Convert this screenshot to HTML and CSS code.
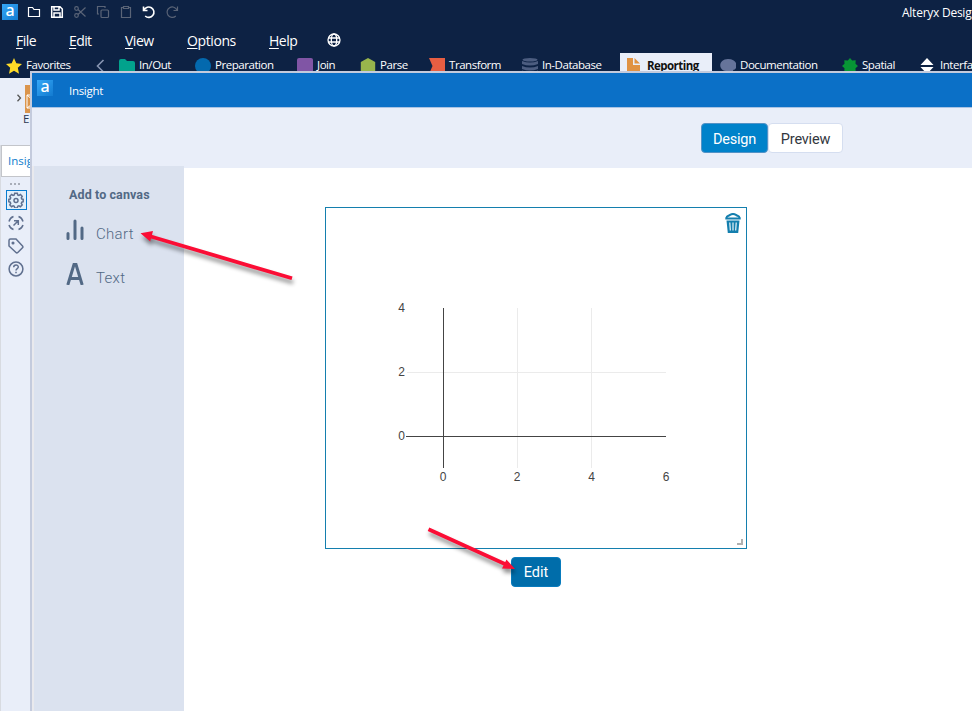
FILE: index.html
```html
<!DOCTYPE html>
<html lang="en">
<head>
<meta charset="utf-8">
<title>Alteryx Designer</title>
<link rel="stylesheet" href="styles.css">
</head>
<body>
<div class="app">
  <header class="header">
    <div class="quick">
      <span class="logo">a</span>
      <svg class="qi first" viewBox="0 0 16 16"><path d="M2.500 12.500v-9h4l1.500 2h5.500v7z"/></svg>
      <svg class="qi save" viewBox="0 0 16 16"><path d="M2.700 2.700h8.300l2.300 2.300v8.300H2.700zM5 3v3h5V3M5 13V9h6v4"/></svg>
      <svg class="qi dim" viewBox="0 0 16 16"><circle cx="4.500" cy="4.500" r="1.800"/><circle cx="4.500" cy="11.500" r="1.800"/><path d="M6 5.500l7.500 7M6 10.500L13.500 3.500"/></svg>
      <svg class="qi dim" viewBox="0 0 16 16"><rect x="6" y="6" width="7.500" height="7.500" rx="1"/><path d="M4 10H2.500V2.500H10V4"/></svg>
      <svg class="qi dim" viewBox="0 0 16 16"><path d="M5.500 3.500h-2v10h9v-10h-2M5.500 2.500h5v2h-5z"/></svg>
      <svg class="qi bold" viewBox="0 0 16 16"><path d="M2.500 2.500v4h4M3 6a5.200 5.200 0 1 1 1.200 6"/></svg>
      <svg class="qi dim" viewBox="0 0 16 16"><path d="M13.500 2.500v4h-4M13 6a5.200 5.200 0 1 0-1.200 6"/></svg>
      <span class="apptitle">Alteryx Designer</span>
    </div>
    <nav class="menu">
      <span class="m-file"><u>F</u>ile</span><span class="m-edit"><u>E</u>dit</span><span class="m-view"><u>V</u>iew</span><span class="m-options"><u>O</u>ptions</span><span class="m-help"><u>H</u>elp</span>
      <svg class="globe" viewBox="0 0 14 14"><circle cx="7" cy="7" r="6"/><ellipse cx="7" cy="7" rx="2.700" ry="6"/><path d="M1 5h12M1 9h12"/></svg>
    </nav>
    <nav class="tabs">
      <span class="tab"><svg viewBox="0 0 16 16"><path fill="#fedb27" d="M8 0l2.300 5.300 5.700.6-4.200 3.900 1.200 5.900L8 12.700 3 15.700l1.200-5.900L0 5.900l5.700-.6z"/></svg><b>Favorites</b></span>
      <span class="tab"><svg viewBox="0 0 16 16"><path fill="none" stroke="#8795b2" stroke-width="1.600" d="M7.500 2L1.500 8l6 6"/></svg></span>
      <span class="tab"><svg viewBox="0 0 16 16"><path fill="#02a28c" d="M0 3q0-2 2-2h4l2 2h6q2 0 2 2v11H0z"/></svg><b>In/Out</b></span>
      <span class="tab"><svg viewBox="0 0 16 16"><circle cx="8" cy="8" r="8" fill="#0369ae"/></svg><b>Preparation</b></span>
      <span class="tab"><svg viewBox="0 0 16 16"><rect width="16" height="16" rx="2" fill="#8055a5"/></svg><b>Join</b></span>
      <span class="tab"><svg viewBox="0 0 16 16"><path fill="#98b54c" d="M8 0l7.200 4v9L8 16 .8 13V4z"/></svg><b>Parse</b></span>
      <span class="tab"><svg viewBox="0 0 16 16"><path fill="#e75e42" d="M0 0h16v16H0l3.500-8z"/></svg><b>Transform</b></span>
      <span class="tab"><svg viewBox="0 0 16 16"><g fill="#4c5d80"><ellipse cx="8" cy="1.700" rx="7.500" ry="1.700"/><path d="M0 3q8 3 16 0v3q-8 3-16 0zM0 8q8 3 16 0v3q-8 3-16 0zM0 12.500q8 3 16 0V16H0z"/></g></svg><b>In-Database</b></span>
      <span class="tab active"><svg viewBox="0 0 16 16"><path fill="#e09243" d="M1 0h6v7h7v9H1zM8.500 0L14 5.500H8.500z"/></svg><b>Reporting</b></span>
      <span class="tab"><svg viewBox="0 0 16 16"><path fill="#66749a" d="M8 1c11 0 10 11 5 11l1 4-5-3C-3 14-2 1 8 1z"/></svg><b>Documentation</b></span>
      <span class="tab"><svg viewBox="0 0 16 16"><path fill="#079535" d="M8 0l2.200 2.500 3.500-.2-.2 3.500L16 8l-2.500 2.200.2 3.500-3.500-.2L8 16l-2.200-2.500-3.500.2.2-3.500L0 8l2.500-2.200-.2-3.500 3.500.2z"/></svg><b>Spatial</b></span>
      <span class="tab"><svg viewBox="0 0 16 16"><path fill="#fff" d="M7 0L.5 7h13zM.5 9h13L7 16z"/></svg><b>Interface</b></span>
    </nav>
  </header>

  <div class="palette">
    <svg class="expand" viewBox="0 0 6 8"><path d="M1.500 .8L4.500 4 1.500 7.200"/></svg>
    <div class="tool"><svg class="toolicon" viewBox="0 0 24 28"><rect width="24" height="28" fill="#db954d"/><path d="M2 10h16v13H2zM2 10l8 7-8 6" fill="none" stroke="#fff"/></svg><span>Email</span></div>
  </div>
  <div class="config">
    <div class="configtab">Insight</div>
    <div class="dots"><i></i><i></i><i></i></div>
    <span class="side selected"><svg viewBox="0 0 16 16"><path d="M6.700 1.200h2.600l.4 1.700 1.200.5 1.500-.9 1.800 1.800-.9 1.500.5 1.200 1.400.3v2.500l-1.400.4-.5 1.200.9 1.500-1.800 1.800-1.500-.9-1.200.5-.4 1.600H6.700l-.4-1.600-1.200-.5-1.500.9-1.800-1.800.9-1.500-.5-1.200L.8 9.800V7.300L2.200 7l.5-1.200-.9-1.500 1.800-1.800 1.500.9 1.200-.5z"/><circle cx="8" cy="8.500" r="2"/></svg></span>
    <span class="side"><svg viewBox="0 0 16 16"><path d="M1 6.500a7 7 0 0 1 4.500-5M10.500 1.500A7 7 0 0 1 15 6.500M15 10a7 7 0 0 1-4.500 4.500M5.500 14.500A7 7 0 0 1 1 10M5.500 10.500l4.500-4.500M6 5.700h4.300V10"/></svg></span>
    <span class="side"><svg viewBox="0 0 16 16"><path d="M1 2.500Q1 1 2.500 1H8l6.500 7q.8 1 0 1.800l-4.700 4.700q-1 .8-1.800 0L1 8z"/><circle cx="5" cy="5" r=".8"/></svg></span>
    <span class="side"><svg viewBox="0 0 16 16"><circle cx="8" cy="8" r="6.900"/><path d="M5.700 6.300c0-3 4.600-3 4.600-.2C10.300 7.700 8 7.600 8 9.500M8 10.800v1.500"/></svg></span>
  </div>

  <section class="window">
    <div class="titlebar"><span class="logo">a</span><span class="wintitle">Insight</span></div>
    <div class="modebar"><button class="mode on"><span>Design</span></button><button class="mode"><span>Preview</span></button></div>
    <div class="body">
      <aside class="sidebar">
        <h2>Add to canvas</h2>
        <div class="add"><svg class="bars" viewBox="0 0 18 22"><path d="M2 14.500v5M9 2v17.500M16 9v10.500"/></svg><span>Chart</span></div>
        <div class="add text"><svg class="lettera" viewBox="0 0 18 22"><path d="M1.800 22L8 1.500h2L16.200 22M4.500 15.500h9"/></svg><span>Text</span></div>
      </aside>
      <main class="canvas">
        <div class="card">
          <svg class="trash" viewBox="0 0 16 20"><path d="M1.500 5C1.500 2.500 4 3.200 5 1.800Q8 .2 11 1.800C12 3.200 14.500 2.500 14.500 5" fill="none" stroke="#147fae" stroke-width="2"/><path fill="#147fae" d="M.3 4.500h15.400v2H.3zM1.500 7.500h13L13.200 20H2.800z"/><path d="M4.800 9.500l.5 8M8 9.500v8M11.200 9.500l-.5 8" stroke="#fff" stroke-width="1.100"/></svg>
          <svg class="plot" viewBox="0 0 290 190">
            <path class="grid" d="M127.500 8v160M201.500 8v160M17 72.500h259"/>
            <path class="axis" d="M53.500 8v160M16 136.500h260"/>
            <g text-anchor="end"><text x="15" y="12">4</text><text x="15" y="76">2</text><text x="15" y="140">0</text></g>
            <g text-anchor="middle"><text x="53" y="181">0</text><text x="127" y="181">2</text><text x="201.500" y="181">4</text><text x="276" y="181">6</text></g>
          </svg>
          <i class="grip"></i>
        </div>
        <button class="edit">Edit</button>
      </main>
    </div>
  </section>

  <svg class="arrows" viewBox="0 0 972 711">
    <g fill="#fb0d35" stroke="#fb0d35">
      <path d="M150 236.200L292 278.300M428.500 529.300L506 564.500" stroke-width="3.800"/>
      <path d="M140.500 233.300l12.500-2.300-2.800 10.600zM515 569l-13-.5 4.500-9z" stroke="none"/>
    </g>
  </svg>
</div>
</body>
</html>
```
FILE: styles.css
```css
* { box-sizing: border-box; }
body { margin: 0; font-family: "Open Sans", "Noto Sans", sans-serif; }
.app { position: relative; width: 972px; height: 711px; overflow: hidden; background: #e9eef9; }
button { padding: 0; font-family: inherit; }

.header { height: 78px; background: #0d2244; color: #fff; overflow: hidden; }
.quick { display: flex; align-items: center; height: 24px; padding-left: 2px; gap: 7px; }
.logo { flex: none; width: 16px; height: 16px; background: linear-gradient(135deg, #35a7f7, #137bd0); color: #fff; font: 500 16px/13px "Noto Sans", sans-serif; text-align: center; }
.qi { flex: none; width: 16px; height: 16px; fill: none; stroke: #fff; stroke-width: 1.2; }
.qi.first { margin-left: 1px; }
.qi.save { stroke-width: 1.5; }
.qi.dim { stroke: #5a6477; }
.qi.bold { stroke-width: 1.6; }
.apptitle { margin: 1px 0 0 715px; font-size: 12px; letter-spacing: -.25px; white-space: nowrap; }
.menu { display: flex; height: 29px; padding: 7px 0 0 16px; font-size: 14px; line-height: 20px; }
.menu span { white-space: nowrap; }
.menu u { text-underline-offset: 2px; }
.m-file { width: 53px; letter-spacing: -.5px; }
.m-edit { width: 56px; letter-spacing: -.6px; }
.m-view { width: 62px; letter-spacing: -.5px; }
.m-options { width: 82px; letter-spacing: -.4px; }
.m-help { width: 58px; letter-spacing: -.5px; }
.globe { width: 14px; height: 14px; margin-top: 2px; fill: none; stroke: #fff; stroke-width: 1.3; }
.tabs { display: grid; height: 25px; padding-left: 6px; grid-template-columns: 90px 23px 76px 102px 63px 69px 93px 98px 100px 122px 78px 100px; }
.tab { display: flex; align-items: center; gap: 4px; font-size: 11.5px; letter-spacing: -.45px; white-space: nowrap; }
.tab b { margin-top: -2px; font-weight: 400; }
.tab svg { flex: none; width: 16px; height: 16px; margin-top: 1px; }
.tab.active { width: 92px; padding-left: 6px; gap: 5px; background: #e9eef9; color: #111; letter-spacing: -.55px; }
.tab.active b { margin-top: 0; font-weight: 700; }

.palette { display: flex; height: 67px; padding: 7px 0 0 16px; }
.expand { flex: none; width: 6px; height: 8px; margin-top: 9px; fill: none; stroke: #555; stroke-width: 1.3; }
.tool { display: flex; flex-direction: column; margin-left: 1px; font-size: 11.5px; line-height: 12px; color: #2c3850; }
.toolicon { width: 24px; height: 28px; margin-left: 2px; }
.config { width: 30px; height: 566px; border-left: 1px solid #d8dbe1; }
.configtab { width: 60px; height: 32px; padding-left: 6px; border: 1px solid #c3c5ca; background: #fff; color: #0e7dcc; font-size: 11.5px; line-height: 30px; }
.dots { display: flex; gap: 2px; height: 13px; padding: 6px 0 0 9px; }
.dots i { width: 2px; height: 2px; background: #a9aeb9; }
.side { display: flex; width: 21px; height: 20px; margin: 0 0 3px 5px; padding-right: 1px; align-items: center; justify-content: center; }
.side.selected { padding: 0 1px 1px 0; border: 1px solid #087ccf; background: #e3f0fb; }
.side svg { flex: none; width: 16px; height: 16px; fill: none; stroke: #60708f; stroke-width: 1.5; }

.window { position: absolute; left: 30px; top: 71px; width: 960px; height: 660px; border: solid #c4cbdd; border-width: 2px 0 0 2px; background: #fff; }
.titlebar { display: flex; height: 35px; padding: 7px 0 0 5px; background: #0b70c7; border-bottom: 1px solid #a9c3e4; color: #fff; }
.wintitle { margin: 3px 0 0 16px; font-size: 11.5px; line-height: 16px; letter-spacing: -.3px; }
.modebar { display: flex; height: 60px; padding: 15px 0 0 669px; background: #e9eef9; }
.mode { width: 67px; height: 30px; border: 1px solid #d5def0; border-radius: 4px; background: #fff; color: #33373e; font: 14.5px "Roboto", sans-serif; letter-spacing: -.25px; }
.mode span { position: relative; top: 1px; }
.mode + .mode { width: 75px; letter-spacing: -.2px; }
.mode.on { border-color: #5292c6; background: #0082ca; color: #fff; }
.body { display: flex; height: 560px; }
.sidebar { width: 152px; margin-top: -2px; padding: 21px 0 0 34px; border-left: 2px solid #e9e9ed; background: #dbe2ef; color: #526985; font-family: "Roboto", sans-serif; }
.sidebar h2 { margin: 0 0 0 1px; font-size: 12.5px; line-height: 16px; font-weight: 700; letter-spacing: .1px; white-space: nowrap; }
.add { display: flex; align-items: center; gap: 12px; height: 24px; margin: 15px 0 0 -2px; font-size: 15px; font-weight: 300; letter-spacing: .3px; }
.add span { margin-top: 7px; }
.add.text { margin-top: 20px; }
.add svg { width: 18px; height: 22px; fill: none; stroke: #526985; stroke-width: 3; }
.bars { stroke-linecap: round; }
.canvas { padding: 39px 0 0 141px; }
.card { position: relative; width: 422px; height: 342px; padding: 92px 0 0 64px; border: 1px solid #147fae; }
.trash { position: absolute; right: 5px; top: 5px; width: 16px; height: 20px; }
.plot { display: block; width: 290px; height: 190px; font: 12px "Liberation Sans", sans-serif; fill: #444; }
.grid { stroke: #ebebeb; }
.axis { stroke: #444; }
.grip { position: absolute; right: 3px; bottom: 3px; width: 6px; height: 6px; border: solid #b0b0b0; border-width: 0 2px 2px 0; }
.edit { display: block; width: 50px; height: 30px; margin: 8px 0 0 186px; padding-top: 1px; border: 1px solid #087bbd; border-radius: 4px; background: #006daa; color: #fff; font: 14.5px "Roboto", sans-serif; }
.arrows { position: absolute; inset: 0; width: 972px; height: 711px; pointer-events: none; filter: drop-shadow(1px 4px 2px rgba(0,0,0,.45)); }
```
